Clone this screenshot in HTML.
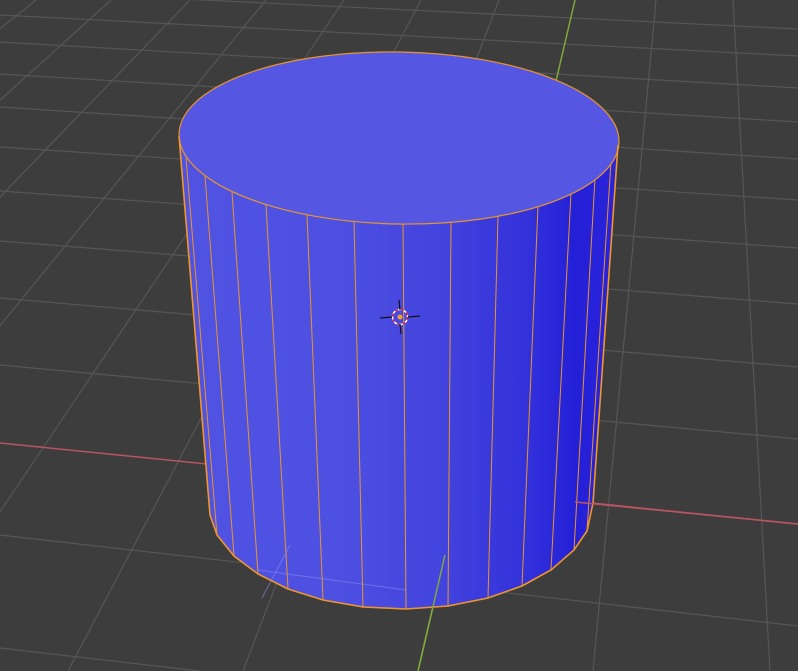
<!DOCTYPE html>
<html><head><meta charset="utf-8"><style>
html,body{margin:0;padding:0;background:#3d3d3d;overflow:hidden;width:798px;height:671px}
svg{display:block;position:absolute;left:0;top:0;overflow:hidden}
</style></head><body>
<svg width="798" height="671" viewBox="0 0 798 671" xmlns="http://www.w3.org/2000/svg">
<defs>
<linearGradient id="side" x1="179" y1="0" x2="618" y2="0" gradientUnits="userSpaceOnUse">
<stop offset="0" stop-color="#5052e2"/>
<stop offset="0.35" stop-color="#4e50e2"/>
<stop offset="0.6" stop-color="#4343de"/>
<stop offset="0.8" stop-color="#3230da"/>
<stop offset="0.9" stop-color="#2420d8"/>
<stop offset="1" stop-color="#2a24da"/>
</linearGradient>
</defs>
<rect width="798" height="671" fill="#3d3d3d"/>
<g stroke="#565656" stroke-width="1.2" fill="none">
<line x1="0" y1="-10" x2="798" y2="29"/>
<line x1="0" y1="15" x2="798" y2="56"/>
<line x1="0" y1="42" x2="798" y2="88"/>
<line x1="0" y1="74" x2="798" y2="122"/>
<line x1="0" y1="107" x2="798" y2="159"/>
<line x1="0" y1="147" x2="798" y2="200"/>
<line x1="0" y1="191" x2="798" y2="248"/>
<line x1="0" y1="241" x2="798" y2="304"/>
<line x1="0" y1="298" x2="798" y2="367"/>
<line x1="0" y1="365" x2="798" y2="439"/>
<line x1="0" y1="535" x2="798" y2="626"/>
<line x1="0" y1="648" x2="199.5" y2="671"/>
<line x1="-42" y1="0" x2="-982" y2="671"/>
<line x1="36" y1="0" x2="-807" y2="671"/>
<line x1="111" y1="0" x2="-632" y2="671"/>
<line x1="190" y1="0" x2="-457" y2="671"/>
<line x1="266" y1="0" x2="-282" y2="671"/>
<line x1="344" y1="0" x2="-107" y2="671"/>
<line x1="421" y1="0" x2="68" y2="671"/>
<line x1="499" y1="0" x2="243" y2="671"/>
<line x1="656" y1="0" x2="593" y2="671"/>
<line x1="733" y1="0" x2="770" y2="671"/>
<line x1="810" y1="0" x2="947" y2="671"/>
</g>
<line x1="0" y1="443" x2="798" y2="524" stroke="#b85560" stroke-width="1.5"/>
<line x1="575" y1="0" x2="418" y2="671" stroke="#7fa93c" stroke-width="1.5"/>

<path d="M179,136 L210,515 L217,535 L234,556 L258,574 L288,589 L323,600 L363,607 L406,609 L448,606 L488,598 L522,586 L551,570 L574,550 L587,531 L593,503 L618,145 Z" fill="url(#side)"/>
<g stroke="#8a88ea" stroke-width="1" opacity="0.6">
<line x1="290" y1="545" x2="262" y2="598"/>
<line x1="258" y1="570" x2="406" y2="590"/>
</g>
<g stroke="#e8952c" stroke-width="1" fill="none">
<line x1="186" y1="158" x2="217" y2="535"/>
<line x1="205" y1="176" x2="234" y2="556"/>
<line x1="232" y1="192" x2="258" y2="574"/>
<line x1="266" y1="205" x2="288" y2="589"/>
<line x1="307" y1="215" x2="323" y2="600"/>
<line x1="354" y1="222" x2="363" y2="607"/>
<line x1="403" y1="224" x2="406" y2="609"/>
<line x1="451" y1="222" x2="448" y2="606"/>
<line x1="498" y1="216" x2="488" y2="598"/>
<line x1="538" y1="206" x2="522" y2="586"/>
<line x1="571" y1="193" x2="551" y2="570"/>
<line x1="595" y1="178" x2="574" y2="550"/>
<line x1="611" y1="162" x2="587" y2="531"/>
</g>
<ellipse cx="399" cy="138" rx="220" ry="86" fill="#5557e3" stroke="#e8952c" stroke-width="1.2" transform="rotate(1 399 138)"/>
<path d="M179,136 L210,515 L217,535 L234,556 L258,574 L288,589 L323,600 L363,607 L406,609 L448,606 L488,598 L522,586 L551,570 L574,550 L587,531 L593,503 L618,145" fill="none" stroke="#f0962a" stroke-width="1.6"/>
<line x1="575" y1="502" x2="798" y2="524" stroke="#b85560" stroke-width="1.5"/>
<line x1="445" y1="555" x2="418" y2="671" stroke="#7fa93c" stroke-width="1.5"/>
<g>
<circle cx="400" cy="317" r="7.5" fill="none" stroke="#fff" stroke-width="1.5"/>
<circle cx="400" cy="317" r="7.5" fill="none" stroke="#d0203a" stroke-width="1.5" stroke-dasharray="3 3"/>
<g stroke="#111" stroke-width="1.2">
<line x1="380" y1="318" x2="392" y2="317"/>
<line x1="408" y1="317" x2="420" y2="316"/>
<line x1="399" y1="300" x2="400" y2="310"/>
<line x1="400" y1="324" x2="401" y2="334"/>
</g>
<circle cx="400" cy="317" r="2.5" fill="#f0a030"/>
</g>
</svg>
</body></html>
